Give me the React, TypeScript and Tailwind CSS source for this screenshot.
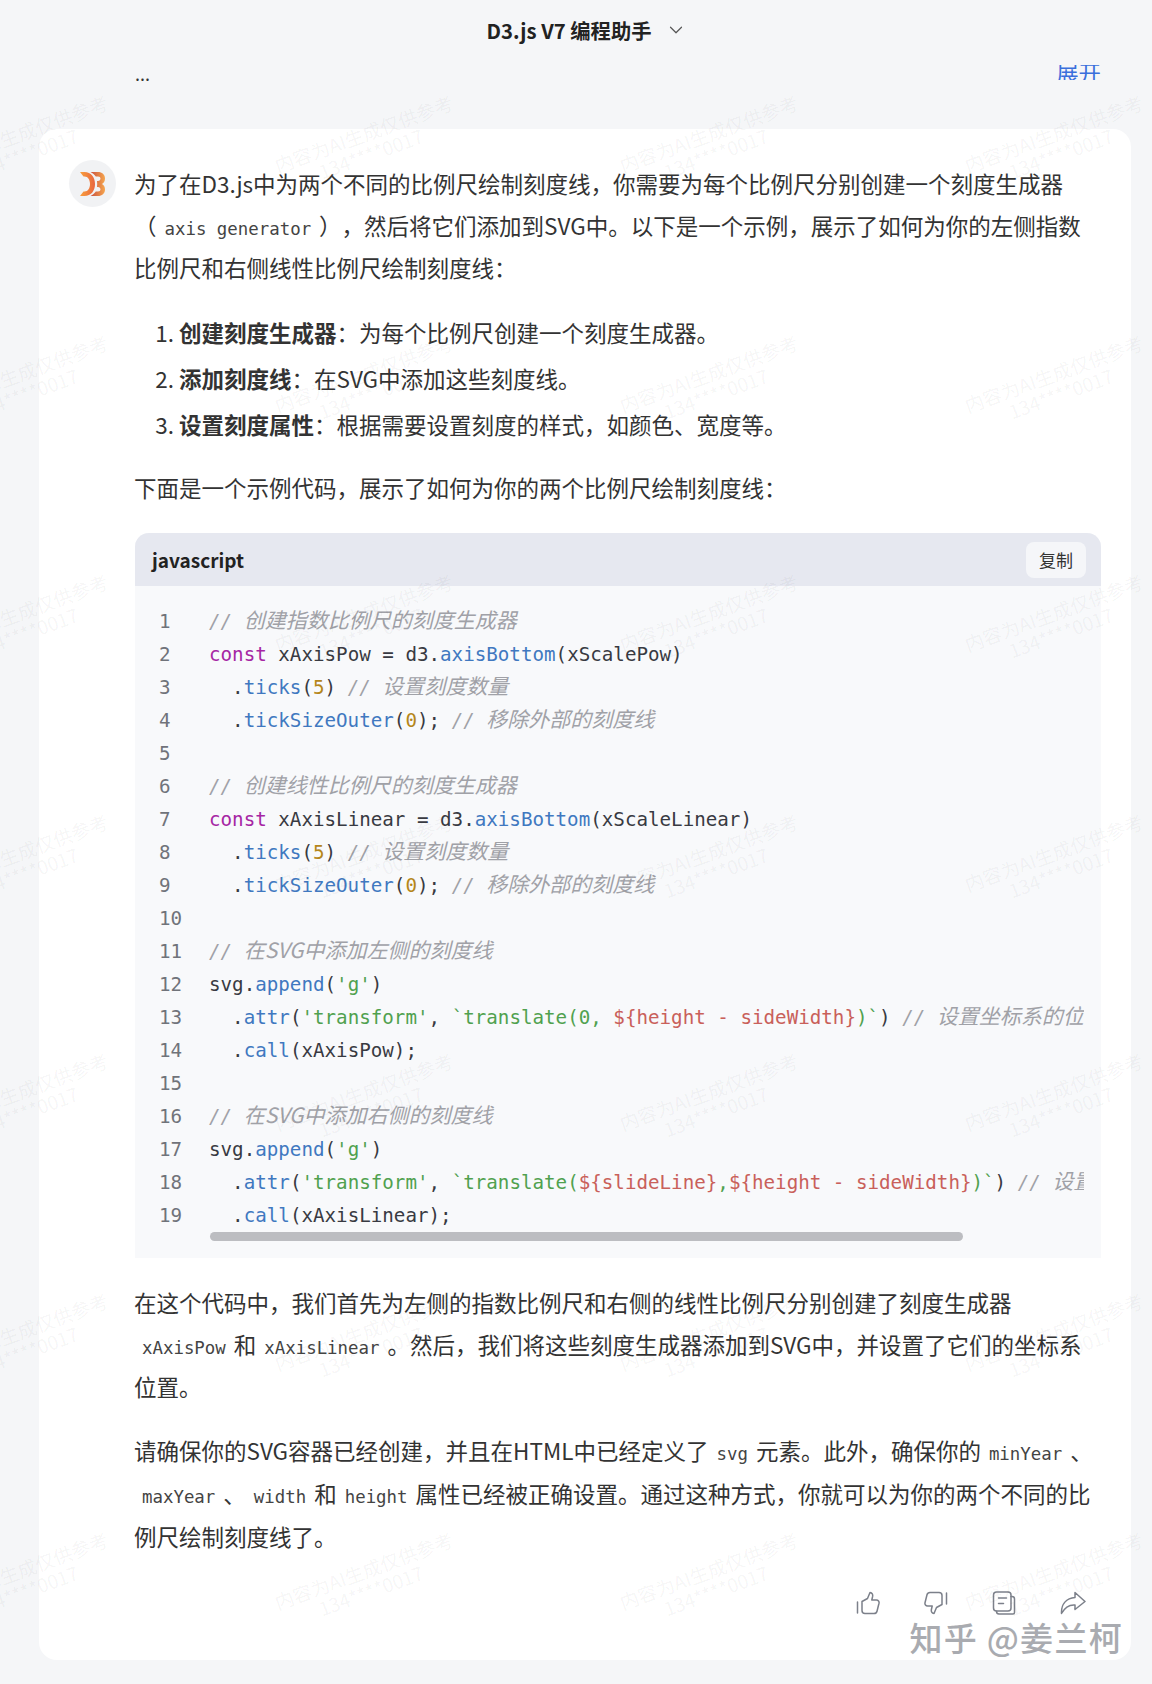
import { ChevronDown } from "lucide-react";

type Tok = [string, string];

const K = "text-[#a626a4]";
const F = "text-[#4078c0]";
const N = "text-[#b5861a]";
const S = "text-[#50a14f]";
const V = "text-[#c9605a]";
const C = "italic text-[#a0a1a7]";
const Z = "italic text-[#a0a1a7] text-[21px] leading-none font-['Noto_Sans_CJK_SC']";
const D = "text-[#383a42]";

const codeLines: Tok[][] = [
  [[C, "// "], [Z, "创建指数比例尺的刻度生成器"]],
  [[K, "const"], [D, " xAxisPow = d3."], [F, "axisBottom"], [D, "(xScalePow)"]],
  [[D, "  ."], [F, "ticks"], [D, "("], [N, "5"], [D, ") "], [C, "// "], [Z, "设置刻度数量"]],
  [[D, "  ."], [F, "tickSizeOuter"], [D, "("], [N, "0"], [D, "); "], [C, "// "], [Z, "移除外部的刻度线"]],
  [],
  [[C, "// "], [Z, "创建线性比例尺的刻度生成器"]],
  [[K, "const"], [D, " xAxisLinear = d3."], [F, "axisBottom"], [D, "(xScaleLinear)"]],
  [[D, "  ."], [F, "ticks"], [D, "("], [N, "5"], [D, ") "], [C, "// "], [Z, "设置刻度数量"]],
  [[D, "  ."], [F, "tickSizeOuter"], [D, "("], [N, "0"], [D, "); "], [C, "// "], [Z, "移除外部的刻度线"]],
  [],
  [[C, "// "], [Z, "在SVG中添加左侧的刻度线"]],
  [[D, "svg."], [F, "append"], [D, "("], [S, "'g'"], [D, ")"]],
  [[D, "  ."], [F, "attr"], [D, "("], [S, "'transform'"], [D, ", "], [S, "`translate(0, "], [V, "${height - sideWidth}"], [S, ")`"], [D, ") "], [C, "// "], [Z, "设置坐标系的位置"]],
  [[D, "  ."], [F, "call"], [D, "(xAxisPow);"]],
  [],
  [[C, "// "], [Z, "在SVG中添加右侧的刻度线"]],
  [[D, "svg."], [F, "append"], [D, "("], [S, "'g'"], [D, ")"]],
  [[D, "  ."], [F, "attr"], [D, "("], [S, "'transform'"], [D, ", "], [S, "`translate("], [V, "${slideLine}"], [S, ","], [V, "${height - sideWidth}"], [S, ")`"], [D, ") "], [C, "// "], [Z, "设置坐标系的位置"]],
  [[D, "  ."], [F, "call"], [D, "(xAxisLinear);"]],
];

const Code = ({ children }: { children: string }) => (
  <code className="mx-[2px] px-[6px] font-['DejaVu_Sans_Mono',monospace] text-[17.4px] leading-none text-[#444]">{children}</code>
);

const Watermarks = () => (
  <div className="pointer-events-none absolute left-[-150px] top-[23px] z-10 grid grid-cols-[repeat(4,345px)] grid-rows-[repeat(7,239.5px)]">
    {Array.from({ length: 28 }).map((_, i) => (
      <div key={i} className="flex h-[240px] w-[345px] items-center justify-center">
        <div className="-rotate-[20deg] text-center font-['Noto_Sans_CJK_SC',sans-serif] text-[19px] leading-[21px] text-black/[0.05]">
          内容为AI生成仅供参考
          <br />
          134****0017
        </div>
      </div>
    ))}
  </div>
);

const D3Logo = () => (
  <svg width="25" height="24" viewBox="0 0 25 24">
    <defs>
      <linearGradient id="d3a" x1="0" y1="0" x2="1" y2="0">
        <stop offset="0" stopColor="#f9a03c" />
        <stop offset="1" stopColor="#e8653f" />
      </linearGradient>
      <linearGradient id="d3b" x1="0" y1="0" x2="1" y2="0">
        <stop offset="0" stopColor="#c9503f" />
        <stop offset="1" stopColor="#f6a64e" />
      </linearGradient>
    </defs>
    <path fill="url(#d3b)" d="M10.5 0H18C22 0 25 2.5 25 6.5C25 9 24 11 22 12C24 13 25 15 25 17.5C25 21.5 22 24 18 24H10.5C12.8 22.7 14.5 21.3 15.8 19.5H18C19.5 19.5 20.5 18.7 20.5 17.5C20.5 16.3 19.5 15 18 15H17C17.3 13 17.3 11 17 9H18C19.5 9 20.5 7.8 20.5 6.5C20.5 5.3 19.5 4.5 18 4.5H15.8C14.5 2.7 12.8 1.3 10.5 0Z" />
    <path fill="url(#d3a)" d="M0 0H4.5C11 0 15 5 15 12C15 19 11 24 4.5 24H0L3.5 19.5H4.5C8 19.5 10 16 10 12C10 8 8 4.5 4.5 4.5H3.5Z" />
  </svg>
);

const ThumbUp = ({ flip }: { flip?: boolean }) => (
  <svg width="24" height="24" viewBox="0 0 24 24" fill="none" stroke="#7c808a" strokeWidth="1.5" strokeLinejoin="round" strokeLinecap="round" className={flip ? "rotate-180" : ""}>
    <path d="M1.5 11v11" />
    <path d="M6 10.5 11.5 7.5 14 1.5c2.2.4 3 2 2.6 4l-.8 3.5h4.6c1.8 0 3 1.4 2.6 3.2l-2 8c-.4 1.5-1.4 2.3-3 2.3H9c-1.8 0-3-1.2-3-3Z" />
  </svg>
);

const CopyIcon = () => (
  <svg width="24" height="24" viewBox="0 0 24 24" fill="none" stroke="#7c808a" strokeWidth="1.5" strokeLinecap="round" strokeLinejoin="round">
    <rect x="1.5" y="1" width="17.5" height="19" rx="3" />
    <path d="M19 5.5h1c1.5 0 2.5 1 2.5 2.5v13.5c0 .8-.7 1.5-1.5 1.5H7c-1.5 0-2.5-1-2.5-2.8" />
    <path d="M6.5 7h8M6.5 12.5h5" />
  </svg>
);

const ShareIcon = () => (
  <svg width="26" height="24" viewBox="0 0 26 24" fill="none" stroke="#7c808a" strokeWidth="1.5" strokeLinejoin="round">
    <path d="M15 1.5 25 10.5 15 18.5V14C9 13.5 4.5 17 1.5 22.5 1 13 6.5 7 15 6.5Z" />
  </svg>
);

export default function App() {
  return (
    <div className="relative h-[1684px] w-[1152px] overflow-hidden bg-[#f5f6f8] font-['Noto_Sans_CJK_SC',sans-serif] text-[#333] [text-spacing-trim:space-all]">
      <Watermarks />

      {/* Title */}
      <div className="flex h-[60px] items-center justify-center gap-[14px] pl-[22px]">
        <span className="text-[20.3px] font-bold text-[#222]">D3.js V7 编程助手</span>
        <ChevronDown className="h-[22px] w-[22px] text-[#555]" strokeWidth={1.3} />
      </div>

      {/* Collapsed message */}
      <div className="flex h-[69px] items-start justify-between pl-[135px] pr-[51px]">
        <span className="text-[18px] leading-[26px] text-[#333]">...</span>
        <span className="mt-[5px] h-[15px] overflow-hidden text-[22.4px] leading-[15px] text-[#3a6fdc]">展开</span>
      </div>

      {/* Answer card */}
      <div className="relative mx-[39px] flex h-[1531px] w-[1092px] rounded-[18px] bg-white pl-[30px] pr-[30px] pt-[31px]">
        <div className="flex h-[47px] w-[47px] shrink-0 items-center justify-center rounded-full bg-[#f1f2f4]">
          <D3Logo />
        </div>

        <div className="ml-[18px] w-[967px] pt-[2px] text-[22.5px] leading-[42px]">
          <p>
            为了在D3.js中为两个不同的比例尺绘制刻度线，你需要为每个比例尺分别创建一个刻度生成器
            <br />（<Code>axis generator</Code>），然后将它们添加到SVG中。以下是一个示例，展示了如何为你的左侧指数比例尺和右侧线性比例尺绘制刻度线：
          </p>

          <ol className="mt-[23px] list-decimal pl-[45px]">
            <li className="h-[46px]"><b>创建刻度生成器</b>：为每个比例尺创建一个刻度生成器。</li>
            <li className="h-[46px]"><b>添加刻度线</b>：在SVG中添加这些刻度线。</li>
            <li className="h-[46px]"><b>设置刻度属性</b>：根据需要设置刻度的样式，如颜色、宽度等。</li>
          </ol>

          <p className="mt-[17px]">下面是一个示例代码，展示了如何为你的两个比例尺绘制刻度线：</p>

          {/* Code block */}
          <div className="ml-[1px] mt-[25px] overflow-hidden rounded-t-[14px] bg-[#f8f9fb]">
            <div className="flex h-[53px] items-center justify-between bg-[#e6e8f0] pl-[17px] pr-[15px]">
              <span className="text-[19px] font-bold text-[#222]">javascript</span>
              <span className="flex h-[36px] w-[60px] items-center justify-center rounded-[8px] bg-[#f5f6f9] text-[17px] text-[#333]">复制</span>
            </div>
            <div className="pb-[17px] pl-[24px] pr-[17px] pt-[19px]">
              <div className="overflow-hidden font-['DejaVu_Sans_Mono',monospace] text-[19.2px] leading-[33px]">
                {codeLines.map((line, i) => (
                  <div key={i} className="flex h-[33px] whitespace-pre">
                    <span className="w-[50px] shrink-0 text-[#70737a]">{i + 1}</span>
                    <span>
                      {line.map(([cls, text], j) => (
                        <span key={j} className={cls}>{text}</span>
                      ))}
                    </span>
                  </div>
                ))}
              </div>
              <div className="ml-[51px] h-[9px] w-[753px] rounded-full bg-[#bcbdc1]" />
            </div>
          </div>

          <p className="mt-[23px]">
            在这个代码中，我们首先为左侧的指数比例尺和右侧的线性比例尺分别创建了刻度生成器
            <br />
            <Code>xAxisPow</Code>和<Code>xAxisLinear</Code>。然后，我们将这些刻度生成器添加到SVG中，并设置了它们的坐标系位置。
          </p>

          <p className="mt-[22px] leading-[43px]">
            请确保你的SVG容器已经创建，并且在HTML中已经定义了<Code>svg</Code>元素。此外，确保你的<Code>minYear</Code>、
            <br />
            <Code>maxYear</Code>、<Code>width</Code>和<Code>height</Code>属性已经被正确设置。通过这种方式，你就可以为你的两个不同的比例尺绘制刻度线了。
          </p>
        </div>

        {/* Actions */}
        <div className="absolute bottom-[45px] right-[45px] flex items-center gap-[44px]">
          <ThumbUp />
          <ThumbUp flip />
          <CopyIcon />
          <ShareIcon />
        </div>

        {/* Site watermark */}
        <div className="absolute bottom-[1px] right-[8px] z-20 text-[33px] font-medium leading-[44px] tracking-[1.3px] text-[#a9abb0]">
          知乎 @姜兰柯
        </div>
      </div>
    </div>
  );
}
